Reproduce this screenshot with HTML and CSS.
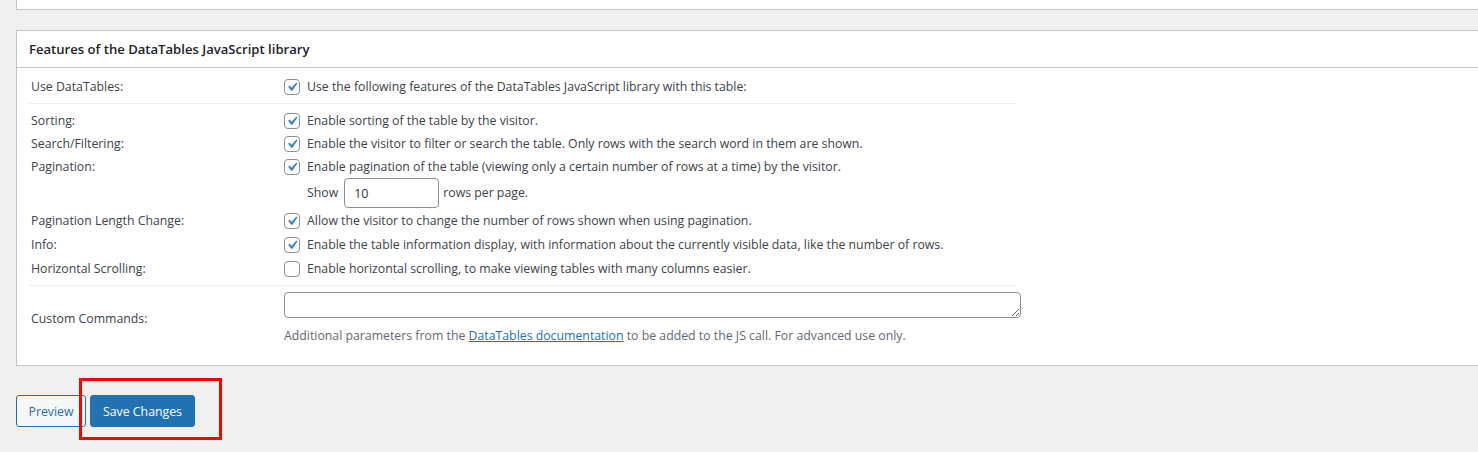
FILE: index.html
```html
<!DOCTYPE html>
<html>
<head>
<meta charset="utf-8">
<link rel="stylesheet" href="styles.css">
</head>
<body>
<div class="wrap">
  <div class="panel panel-top"></div>
  <div class="panel panel-main">
    <div class="panel-header">Features of the DataTables JavaScript library</div>
    <div class="form">
      <div class="group grp1">
        <div class="row">
          <div class="label">Use DataTables:</div>
          <div class="field"><span class="cb on"><svg viewBox="0 0 20 20"><path d="M14.83 4.89l1.34.94-5.81 8.38H9.02L5.78 9.67l1.34-1.250 2.57 2.4z"/></svg></span>Use the following features of the DataTables JavaScript library with this table:</div>
        </div>
      </div>
      <div class="group grp2">
        <div class="row r23">
          <div class="label">Sorting:</div>
          <div class="field"><span class="cb on"><svg viewBox="0 0 20 20"><path d="M14.83 4.89l1.34.94-5.81 8.38H9.02L5.78 9.67l1.34-1.25 2.57 2.4z"/></svg></span>Enable sorting of the table by the visitor.</div>
        </div>
        <div class="row r23">
          <div class="label">Search/Filtering:</div>
          <div class="field"><span class="cb on"><svg viewBox="0 0 20 20"><path d="M14.83 4.89l1.34.94-5.81 8.38H9.02L5.78 9.67l1.34-1.25 2.57 2.4z"/></svg></span>Enable the visitor to filter or search the table. Only rows with the search word in them are shown.</div>
        </div>
        <div class="row r23">
          <div class="label">Pagination:</div>
          <div class="field"><span class="cb on"><svg viewBox="0 0 20 20"><path d="M14.83 4.89l1.34.94-5.81 8.38H9.02L5.78 9.67l1.34-1.25 2.57 2.4z"/></svg></span>Enable pagination of the table (viewing only a certain number of rows at a time) by the visitor.</div>
        </div>
        <div class="row show-row">
          <div class="label"></div>
          <div class="field show-field">Show <input class="num" type="text" value="10"> rows per page.</div>
        </div>
        <div class="row r24">
          <div class="label">Pagination Length Change:</div>
          <div class="field"><span class="cb on"><svg viewBox="0 0 20 20"><path d="M14.83 4.89l1.34.94-5.81 8.38H9.02L5.78 9.67l1.34-1.25 2.57 2.4z"/></svg></span>Allow the visitor to change the number of rows shown when using pagination.</div>
        </div>
        <div class="row r24">
          <div class="label">Info:</div>
          <div class="field"><span class="cb on"><svg viewBox="0 0 20 20"><path d="M14.83 4.89l1.34.94-5.81 8.38H9.02L5.78 9.67l1.34-1.25 2.57 2.4z"/></svg></span>Enable the table information display, with information about the currently visible data, like the number of rows.</div>
        </div>
        <div class="row r24">
          <div class="label">Horizontal Scrolling:</div>
          <div class="field"><span class="cb"></span>Enable horizontal scrolling, to make viewing tables with many columns easier.</div>
        </div>
      </div>
      <div class="group grp3">
        <div class="row cc-row">
          <div class="label">Custom Commands:</div>
          <div class="field cc-field">
            <textarea class="cmd" rows="1"></textarea>
            <p class="desc">Additional parameters from the <a href="#">DataTables documentation</a> to be added to the JS call. For advanced use only.</p>
          </div>
        </div>
      </div>
    </div>
  </div>
  <div class="actions">
    <button class="btn btn-secondary">Preview</button>
    <button class="btn btn-primary">Save Changes</button>
  </div>
</div>
<div class="highlight"></div>
</body>
</html>
```
FILE: styles.css
```css
html, body {
  margin: 0;
  padding: 0;
}
body {
  background: #f0f0f1;
  font-family: "Open Sans", "Noto Sans", sans-serif;
  font-size: 12.3px;
  color: #3c434a;
  height: 452px;
  overflow: hidden;
  position: relative;
}
.wrap {
  padding-left: 16px;
}
.panel {
  background: #fff;
  border: 1px solid #c3c4c7;
  border-right: none;
}
.panel-top {
  height: 9px;
  border-top: none;
}
.panel-main {
  margin-top: 20px;
}
.panel-header {
  height: 36px;
  line-height: 36px;
  padding: 0 12px;
  font-size: 13.1px;
  font-weight: 600;
  color: #1d2327;
  border-bottom: 1px solid #c3c4c7;
}
.form {
  padding: 0 0 9px 12px;
}
.group {
  width: 987px;
}
.grp1 {
  padding: 7px 0 4px;
  border-bottom: 1px solid #f0f0f1;
}
.grp2 {
  padding: 5px 0 4px;
  border-bottom: 1px solid #f0f0f1;
}
.grp3 {
  padding: 6px 0 11px;
}
.row {
  display: flex;
  align-items: center;
  line-height: 24px;
}
.r23 { height: 23px; }
.r24 { height: 24px; }
.label {
  width: 255px;
  flex: none;
  padding-left: 2px;
  box-sizing: border-box;
}
.field {
  display: flex;
  align-items: center;
  white-space: nowrap;
}
.cb {
  width: 16px;
  height: 16px;
  box-sizing: border-box;
  border: 1px solid #8c8f94;
  border-radius: 4px;
  background: #fff;
  margin-right: 7px;
  flex: none;
  display: flex;
  align-items: center;
  justify-content: center;
}
.cb svg {
  width: 20px;
  height: 20px;
  fill: #3582c4;
  margin: -2px;
}
.show-row {
  height: 30px;
  margin-bottom: 1px;
}
.show-field {
  padding-left: 23px;
}
.num {
  width: 95px;
  height: 30px;
  box-sizing: border-box;
  margin: 0 4px 0 6px;
  padding: 0 9px;
  border: 1px solid #8c8f94;
  border-radius: 4px;
  font-family: inherit;
  font-size: 12.5px;
  color: #2c3338;
  background: #fff;
}
.cc-row {
  align-items: center;
}
.cc-field {
  display: block;
}
.cmd {
  display: block;
  width: 737px;
  height: 26px;
  box-sizing: border-box;
  border: 1px solid #8c8f94;
  border-radius: 4px;
  margin: 0;
  padding: 2px 6px;
  font-family: inherit;
  resize: both;
}
.desc {
  margin: 9px 0 0;
  line-height: 18px;
  color: #646970;
}
.desc a {
  color: #2271b1;
  text-decoration: underline;
}
.actions {
  display: flex;
  gap: 4px;
  margin-top: 29px;
}
.btn {
  height: 32px;
  box-sizing: border-box;
  border-radius: 3px;
  font-family: inherit;
  font-size: 12.3px;
  padding: 0;
  cursor: pointer;
}
.btn-secondary {
  width: 70px;
  border: 1px solid #2271b1;
  background: #f6f7f7;
  color: #2271b1;
}
.btn-primary {
  width: 105px;
  border: 1px solid #2271b1;
  background: #2271b1;
  color: #fff;
}
.highlight {
  position: absolute;
  left: 79px;
  top: 378px;
  width: 143px;
  height: 62px;
  box-sizing: border-box;
  border: 3px solid #ff0000;
}
```
